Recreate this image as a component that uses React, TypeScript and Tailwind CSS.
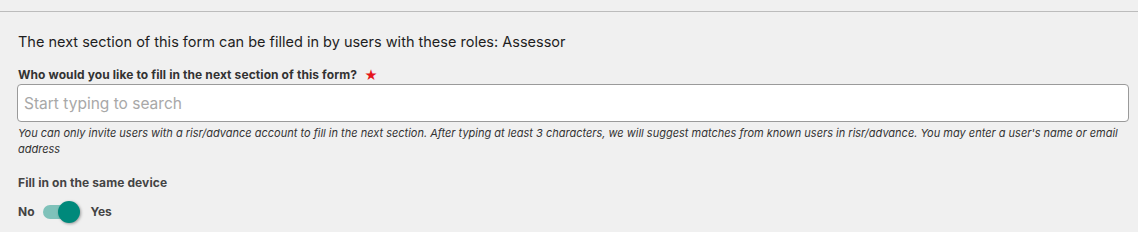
export default function App() {
  return (
    <div className="min-h-[232px] w-full bg-[#f0f0f0] font-['Inter',sans-serif] text-[#222]">
      <div className="h-[11px]" />
      <div className="border-t border-[#bcbcbc] px-[18px] pt-[20px]">
        <p className="text-[14.5px] leading-[20px] text-[#1e1e1e]">
          The next section of this form can be filled in by users with these roles: Assessor
        </p>

        <div className="mt-[15px]">
          <label className="flex items-center gap-[7px] text-[12px] font-bold leading-[16px] tracking-[0.1px] text-[#333]">
            Who would you like to fill in the next section of this form?
            <span className="text-[13px] text-[#e5141b]">★</span>
          </label>
          <input
            type="text"
            placeholder="Start typing to search"
            className="mt-[1px] ml-[-1px] block h-[38px] w-[1112px] rounded-[4px] border border-[#9a9a9a] bg-white px-[6px] text-[15.5px] placeholder:text-[#a8a8a8] focus:outline-none"
          />
          <p className="mt-[3px] text-[11px] italic leading-[16px] text-[#333]">
            You can only invite users with a risr/advance account to fill in the next section. After typing at least 3
            characters, we will suggest matches from known users in risr/advance. You may enter a user&apos;s name or
            email address
          </p>
        </div>

        <div className="mt-[18px]">
          <p className="text-[12px] font-bold leading-[16px] tracking-[0.1px] text-[#444]">Fill in on the same device</p>
          <div className="mt-[12px] flex items-center gap-[8px] text-[12px] font-bold text-[#444]">
            <span>No</span>
            <button type="button" role="switch" aria-checked="true" className="relative h-[14px] w-[35px] rounded-full bg-[#7fc2ba]">
              <span className="absolute right-[-2px] top-[-4px] h-[22px] w-[22px] rounded-full bg-[#00897b] shadow-[1px_1px_3px_rgba(0,0,0,0.35)]" />
            </button>
            <span className="ml-[5px]">Yes</span>
          </div>
        </div>
      </div>
    </div>
  );
}
